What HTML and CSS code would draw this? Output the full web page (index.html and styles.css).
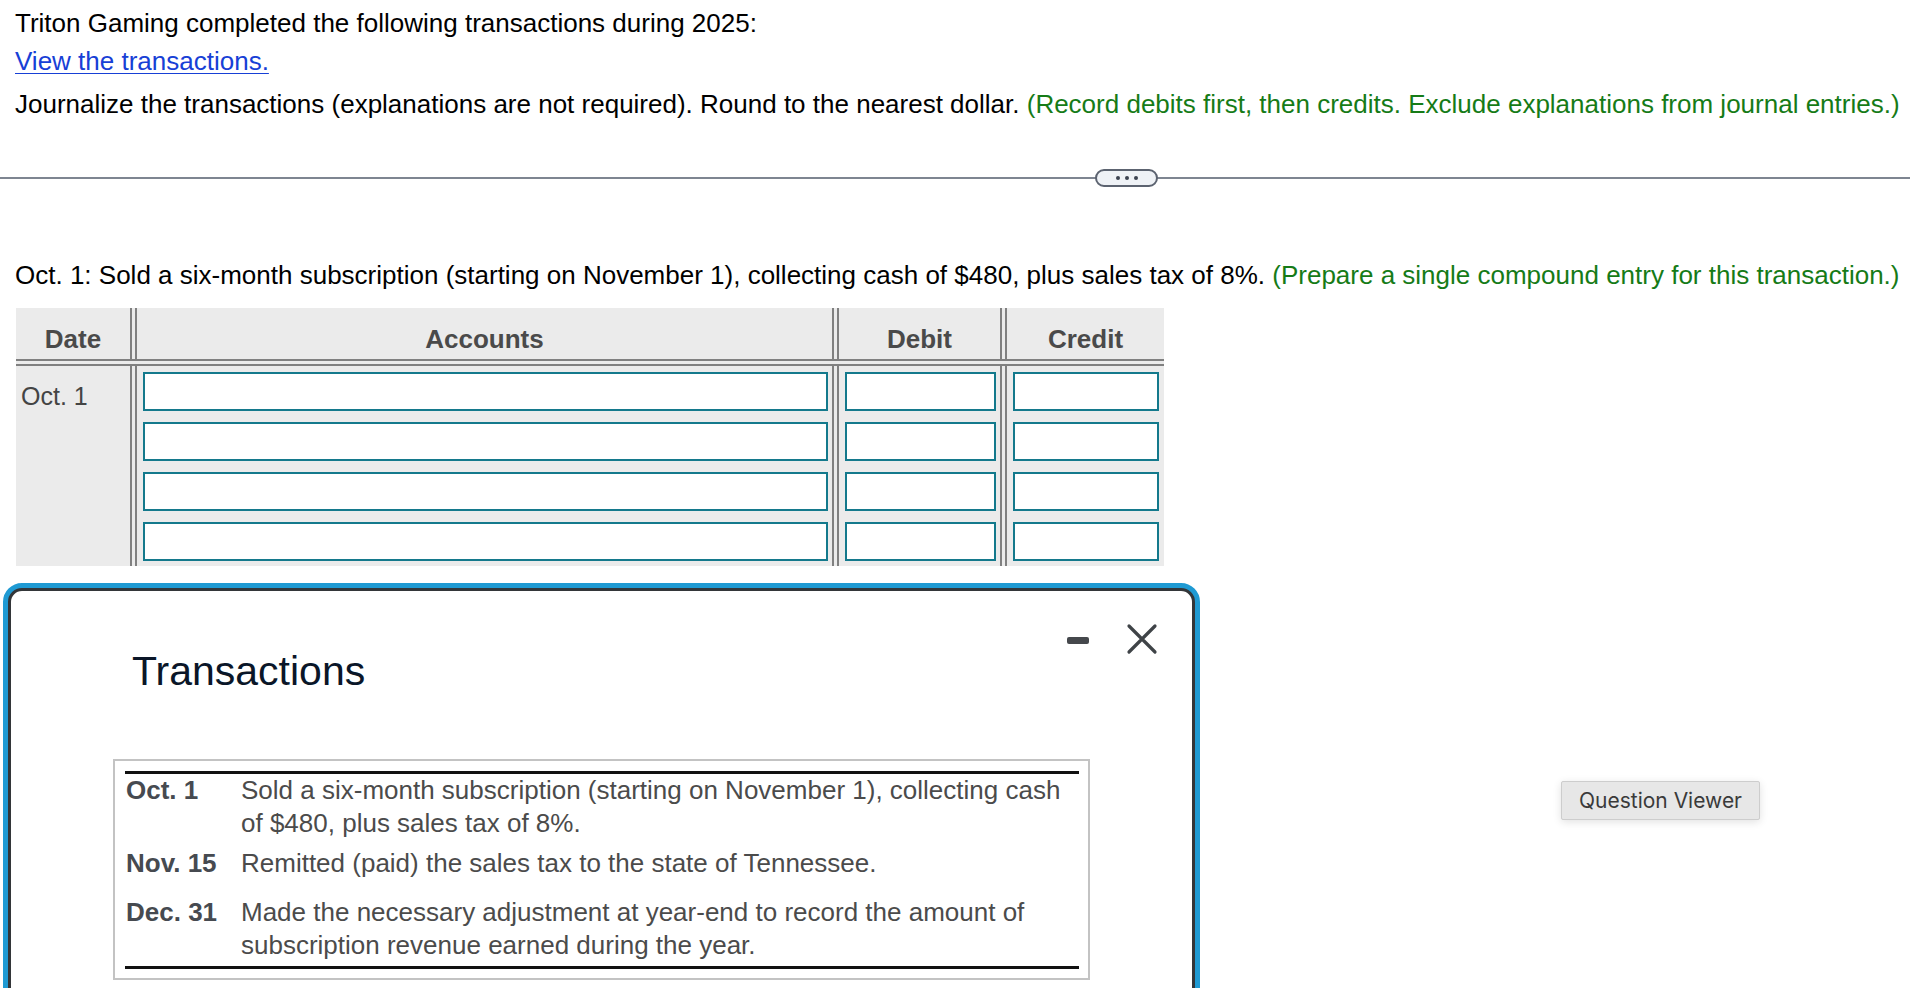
FILE: index.html
```html
<!DOCTYPE html>
<html lang="en">
<head>
<meta charset="utf-8">
<title>Triton Gaming – Journal Entry</title>
<link rel="stylesheet" href="styles.css">
</head>
<body>
<div class="page">
  <div class="intro">
    <p class="line first">Triton Gaming completed the following transactions during 2025:</p>
    <p class="line second"><a class="link" href="#">View the transactions.</a></p>
    <p class="line third">Journalize the transactions (explanations are not required). Round to the nearest dollar. <span class="hint">(Record debits first, then credits. Exclude explanations from journal entries.)</span></p>
  </div>

  <div class="divider">
    <span class="pill"><i class="dot"></i><i class="dot"></i><i class="dot"></i></span>
  </div>

  <p class="line question">Oct. 1: Sold a six-month subscription (starting on November 1), collecting cash of $480, plus sales tax of 8%. <span class="hint">(Prepare a single compound entry for this transaction.)</span></p>

  <div class="journal">
    <div class="jrow jhead">
      <div class="jcell">Date</div>
      <div class="jcell sep">Accounts</div>
      <div class="jcell sep">Debit</div>
      <div class="jcell sep">Credit</div>
    </div>
    <div class="jrow jbody">
      <div class="jcell datecell">Oct. 1</div>
      <div class="jcell sep inputs acc">
        <input class="field" type="text" aria-label="Account 1">
        <input class="field" type="text" aria-label="Account 2">
        <input class="field" type="text" aria-label="Account 3">
        <input class="field" type="text" aria-label="Account 4">
      </div>
      <div class="jcell sep inputs deb">
        <input class="field" type="text" aria-label="Debit 1">
        <input class="field" type="text" aria-label="Debit 2">
        <input class="field" type="text" aria-label="Debit 3">
        <input class="field" type="text" aria-label="Debit 4">
      </div>
      <div class="jcell sep inputs cred">
        <input class="field" type="text" aria-label="Credit 1">
        <input class="field" type="text" aria-label="Credit 2">
        <input class="field" type="text" aria-label="Credit 3">
        <input class="field" type="text" aria-label="Credit 4">
      </div>
    </div>
  </div>

  <div class="modal">
    <div class="modal-inner">
      <div class="modal-head">
        <h2 class="modal-title">Transactions</h2>
        <div class="controls">
          <span class="minimize"></span>
          <svg class="close" viewBox="0 0 32 32" width="32" height="32" aria-label="Close">
            <path d="M3 3 L29 29 M29 3 L3 29" stroke="#3f4347" stroke-width="3.2" fill="none" stroke-linecap="round"/>
          </svg>
        </div>
      </div>
      <div class="tx-box">
        <div class="tx-rules">
          <div class="tx-row">
            <div class="tx-date">Oct. 1</div>
            <div class="tx-desc">Sold a six-month subscription (starting on November 1), collecting cash of $480, plus sales tax of 8%.</div>
          </div>
          <div class="tx-row mid">
            <div class="tx-date">Nov. 15</div>
            <div class="tx-desc">Remitted (paid) the sales tax to the state of Tennessee.</div>
          </div>
          <div class="tx-row last">
            <div class="tx-date">Dec. 31</div>
            <div class="tx-desc">Made the necessary adjustment at year-end to record the amount of subscription revenue earned during the year.</div>
          </div>
        </div>
      </div>
    </div>
  </div>
</div>

<button class="qv" type="button">Question Viewer</button>
</body>
</html>
```

FILE: styles.css
```css
* { box-sizing: border-box; }

html, body {
  margin: 0;
  padding: 0;
  background: #ffffff;
  overflow: hidden;
}

body {
  font-family: "Liberation Sans", Arial, Helvetica, sans-serif;
  color: #000;
  width: 1910px;
  height: 988px;
  position: relative;
}

.page {
  display: flex;
  flex-direction: column;
}

.intro {
  padding-left: 15px;
}

.line {
  margin: 0;
  font-size: 26px;
  line-height: 30px;
  white-space: nowrap;
}

.line.first { margin-top: 8px; }
.line.second { margin-top: 8px; }
.line.third { margin-top: 13px; }

.link {
  color: #1740d6;
  text-decoration: underline;
  text-underline-offset: 3px;
  text-decoration-thickness: 1px;
}

.hint {
  color: #167b17;
}

.divider {
  margin-top: 58px;
  height: 2px;
  background: #7e8591;
  position: relative;
}

.pill {
  position: absolute;
  left: 1095px;
  top: -8px;
  width: 63px;
  height: 18px;
  border: 2px solid #5c6370;
  border-radius: 9px;
  background: #eff2f6;
  display: flex;
  align-items: center;
  justify-content: center;
  gap: 5px;
}

.dot {
  width: 4px;
  height: 4px;
  border-radius: 50%;
  background: #3c4350;
}

.question {
  padding-left: 15px;
  margin-top: 81px;
}

/* Journal table */
.journal {
  margin-top: 18px;
  margin-left: 16px;
  width: 1148px;
  background: #ebebeb;
}

.jrow {
  display: grid;
  grid-template-columns: 114px 702px 168px 164px;
}

.jhead {
  height: 58px;
  border-bottom: 7px double #808080;
}

.jhead .jcell {
  font-weight: bold;
  font-size: 26px;
  color: #4a4a4a;
  display: flex;
  align-items: center;
  justify-content: center;
  padding-top: 12px;
}

.sep {
  border-left: 7px double #808080;
}

.jbody .jcell {
  padding-top: 6px;
  padding-bottom: 5px;
}

.jbody .datecell {
  font-size: 25px;
  color: #444;
  padding-left: 5px;
  line-height: 30px;
  padding-top: 15px;
}

.inputs {
  display: flex;
  flex-direction: column;
  gap: 11px;
}

.acc { padding-left: 6px; padding-right: 4px; }
.deb { padding-left: 6px; padding-right: 4px; }
.cred { padding-left: 6px; padding-right: 5px; }

.field {
  display: block;
  width: 100%;
  height: 39px;
  margin: 0;
  border: 2px solid #14798c;
  border-radius: 0;
  background: #fff;
  font: inherit;
  padding: 0 6px;
}

/* Modal */
.modal {
  margin-top: 17px;
  margin-left: 3px;
  width: 1197px;
  height: 440px;
  border: 5px solid #1f9ad3;
  border-radius: 19px;
  background: #1f9ad3;
}

.modal-inner {
  height: 100%;
  border: 3px solid #333639;
  border-radius: 14px;
  background: #fff;
  padding: 0 34px 0 102px;
}

.modal-head {
  display: flex;
  justify-content: space-between;
  align-items: flex-start;
}

.modal-title {
  margin: 56px 0 0 19px;
  font-size: 41px;
  line-height: 48px;
  font-weight: normal;
  color: #0a1628;
}

.controls {
  margin-top: 32px;
  display: flex;
  align-items: center;
  gap: 37px;
}

.minimize {
  display: block;
  width: 22px;
  height: 7px;
  border-radius: 2px;
  background: #45484c;
  margin-top: 2px;
}

.close { display: block; }

.tx-box {
  margin-top: 64px;
  width: 977px;
  border: 2px solid #c3c3c3;
  padding: 10px 9px 9px 10px;
}

.tx-rules {
  border-top: 3px solid #111;
  border-bottom: 3px solid #111;
  padding: 0 0 4px 0;
}

.tx-row {
  display: flex;
  font-size: 26px;
  line-height: 33px;
  color: #4b4b4b;
  padding-bottom: 7px;
}

.tx-row.mid { padding-bottom: 16px; }
.tx-row.last { padding-bottom: 0; }

.tx-date {
  width: 116px;
  flex: none;
  font-weight: bold;
  color: #464a50;
  padding-left: 1px;
}

.tx-desc {
  width: 838px;
  flex: none;
}

/* Floating question viewer button */
.qv {
  position: absolute;
  left: 1561px;
  top: 781px;
  width: 199px;
  height: 39px;
  border: 1px solid #cdcdcd;
  border-radius: 2px;
  background: #e7e7e7;
  color: #3a3a3a;
  font-family: Inter, "Open Sans", sans-serif;
  font-size: 21px;
  padding: 0;
  box-shadow: 0 2px 8px rgba(0, 0, 0, 0.12);
}
```
